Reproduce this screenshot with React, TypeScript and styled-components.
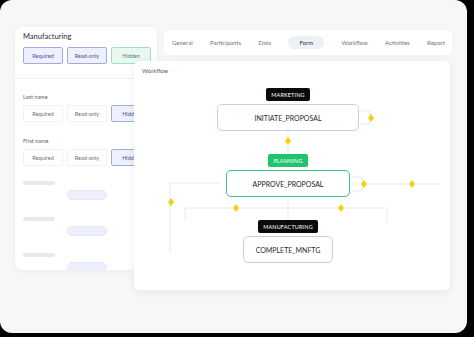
import styled, { createGlobalStyle } from "styled-components";

const GlobalStyle = createGlobalStyle`
    html, body {
        margin: 0;
        background: #000;
    }
    body {
        font-family: Lato, "Open Sans", sans-serif;
    }
`;

const Frame = styled.div`
    width: 467px;
    height: 333px;
    box-sizing: border-box;
    background: #f7f7f6;
    border-radius: 12px;
    padding: 27px 0 0 15px;
    display: flex;
    align-items: flex-start;
    overflow: hidden;
`;

const FormCard = styled.div`
    width: 142px;
    height: 243px;
    box-sizing: border-box;
    padding: 0 8px;
    background: #fff;
    border-radius: 7px;
    box-shadow: 0 1px 6px rgba(0, 0, 0, 0.05);
    overflow: hidden;
`;

const CardTitle = styled.div`
    height: 20px;
    line-height: 20px;
    font-size: 7.5px;
    color: #2b2d33;
`;

const ChoiceRow = styled.div`
    display: flex;
    gap: 4px;
    height: 17px;
`;

const Choice = styled.div<{ $tone?: "blue" | "green" }>`
    flex: 0 0 40px;
    box-sizing: border-box;
    display: flex;
    align-items: center;
    justify-content: center;
    font-size: 5.5px;
    border-radius: 2px;
    border: 1px solid
        ${(p) => (p.$tone === "blue" ? "#a3aae0" : p.$tone === "green" ? "#a5dfc0" : "#f1f1f3")};
    background: ${(p) => (p.$tone === "blue" ? "#eef0fc" : p.$tone === "green" ? "#e9f8f0" : "#fff")};
    color: ${(p) => (p.$tone === "blue" ? "#4652a6" : p.$tone === "green" ? "#5a7d6a" : "#6d6f76")};
`;

const Divider = styled.div`
    height: 1px;
    margin: 14px -8px 0;
    background: #efeff1;
`;

const FieldLabel = styled.div<{ $top: number }>`
    margin-top: ${(p) => p.$top}px;
    margin-bottom: 4px;
    line-height: 8px;
    font-size: 5.5px;
    color: #5e6068;
`;

const SkeletonGroup = styled.div<{ $first?: boolean }>`
    margin-top: ${(p) => (p.$first ? 15 : 17)}px;
    display: flex;
    flex-direction: column;
    gap: 5px;
`;

const SkeletonBar = styled.div`
    width: 32px;
    height: 4px;
    border-radius: 2px;
    background: #e8e8ea;
`;

const SkeletonPill = styled.div`
    margin-left: 44px;
    width: 40px;
    height: 10px;
    box-sizing: border-box;
    border-radius: 6px;
    background: #edf0fc;
    border: 1px solid #e2e6f8;
`;

const RightColumn = styled.div`
    position: relative;
    z-index: 1;
    margin: 3px 0 0 -23px;
    width: 316px;
`;

const TabBar = styled.div`
    margin-left: 30px;
    width: 288px;
    height: 25px;
    box-sizing: border-box;
    padding: 0 7px 0 8px;
    background: #fff;
    border-radius: 4px;
    display: flex;
    align-items: center;
    justify-content: space-between;
    box-shadow: 0 1px 4px rgba(0, 0, 0, 0.03);
`;

const Tab = styled.div<{ $active?: boolean }>`
    padding: 3px ${(p) => (p.$active ? 11 : 0)}px;
    font-size: 6px;
    line-height: 7px;
    border-radius: 6px;
    color: ${(p) => (p.$active ? "#2f3440" : "#70737b")};
    background: ${(p) => (p.$active ? "#edf0f5" : "transparent")};
`;

const Panel = styled.div`
    position: relative;
    margin-top: 6px;
    width: 316px;
    height: 229px;
    background: #fff;
    border-radius: 6px;
    box-shadow: 0 2px 10px rgba(0, 0, 0, 0.07);
    overflow: hidden;
`;

const PanelLabel = styled.div`
    padding: 6px 0 0 8px;
    line-height: 8px;
    font-size: 6px;
    color: #55585f;
`;

const Wires = styled.svg`
    position: absolute;
    inset: 0;
`;

const NodeColumn = styled.div`
    position: relative;
    width: 308px;
    margin-top: 13px;
    display: flex;
    flex-direction: column;
    align-items: center;
`;

const Tag = styled.div<{ $green?: boolean }>`
    height: 13px;
    padding: 0 5px;
    display: flex;
    align-items: center;
    border-radius: 2px;
    font-size: 5.5px;
    letter-spacing: 0.15px;
    color: #fff;
    background: ${(p) => (p.$green ? "#1fc46e" : "#0b0b0c")};
`;

const StepBox = styled.div<{ $width: number; $green?: boolean; $gap?: number }>`
    width: ${(p) => p.$width}px;
    height: 27px;
    margin: 3px 0 ${(p) => p.$gap ?? 0}px;
    box-sizing: border-box;
    display: flex;
    align-items: center;
    justify-content: center;
    border-radius: 5px;
    border: ${(p) => (p.$green ? "1.5px solid #3fc689" : "1px solid #c9cde2")};
    font-size: 7px;
    color: ${(p) => (p.$green ? "#1d1f24" : "#2a2c33")};
`;

const Diamond = ({ x, y }: { x: number; y: number }) => (
    <polygon points={`${x},${y - 4} ${x + 3},${y} ${x},${y + 4} ${x - 3},${y}`} fill="#f4d10c" />
);

const wire = { stroke: "#e1e3ea", strokeWidth: 0.8, fill: "none" };

const tabs = ["General", "Participants", "Data", "Form", "Workflow", "Activities", "Report"];

const App = () => {
    return (
        <>
            <GlobalStyle />
            <Frame>
                <FormCard>
                    <CardTitle>Manufacturing</CardTitle>
                    <ChoiceRow>
                        <Choice $tone="blue">Required</Choice>
                        <Choice $tone="blue">Read-only</Choice>
                        <Choice $tone="green">Hidden</Choice>
                    </ChoiceRow>
                    <Divider />
                    <FieldLabel $top={14}>Last name</FieldLabel>
                    <ChoiceRow>
                        <Choice>Required</Choice>
                        <Choice>Read-only</Choice>
                        <Choice $tone="blue">Hidden</Choice>
                    </ChoiceRow>
                    <FieldLabel $top={15}>First name</FieldLabel>
                    <ChoiceRow>
                        <Choice>Required</Choice>
                        <Choice>Read-only</Choice>
                        <Choice $tone="blue">Hidden</Choice>
                    </ChoiceRow>
                    {[0, 1, 2].map((i) => (
                        <SkeletonGroup key={i} $first={i === 0}>
                            <SkeletonBar />
                            <SkeletonPill />
                        </SkeletonGroup>
                    ))}
                </FormCard>

                <RightColumn>
                    <TabBar>
                        {tabs.map((t) => (
                            <Tab key={t} $active={t === "Form"}>
                                {t}
                            </Tab>
                        ))}
                    </TabBar>

                    <Panel>
                        <Wires width="316" height="229" viewBox="0 0 316 229">
                            {/* main spine */}
                            <line x1="154" y1="70" x2="154" y2="93" {...wire} />
                            <line x1="154" y1="136" x2="154" y2="159" {...wire} />
                            {/* initiate bracket */}
                            <path d="M227 50 H236 V63 H227" {...wire} />
                            {/* approve bracket and branch */}
                            <path d="M219 116 H228 V130 H219 M219 123 H306" {...wire} />
                            {/* loop back on the left */}
                            <path d="M86 122 H36 V192" {...wire} />
                            <path d="M51 160 V147 H253 V161" {...wire} />
                            <Diamond x={154} y={80} />
                            <Diamond x={237} y={57} />
                            <Diamond x={230} y={123} />
                            <Diamond x={278} y={123} />
                            <Diamond x={37} y={141} />
                            <Diamond x={102} y={147} />
                            <Diamond x={207} y={147} />
                        </Wires>
                        <PanelLabel>Workflow</PanelLabel>
                        <NodeColumn>
                            <Tag>MARKETING</Tag>
                            <StepBox $width={142} $gap={23}>
                                INITIATE_PROPOSAL
                            </StepBox>
                            <Tag $green>PLANNING</Tag>
                            <StepBox $width={124} $green $gap={23}>
                                APPROVE_PROPOSAL
                            </StepBox>
                            <Tag>MANUFACTURING</Tag>
                            <StepBox $width={90}>COMPLETE_MNFTG</StepBox>
                        </NodeColumn>
                    </Panel>
                </RightColumn>
            </Frame>
        </>
    );
};

export default App;
